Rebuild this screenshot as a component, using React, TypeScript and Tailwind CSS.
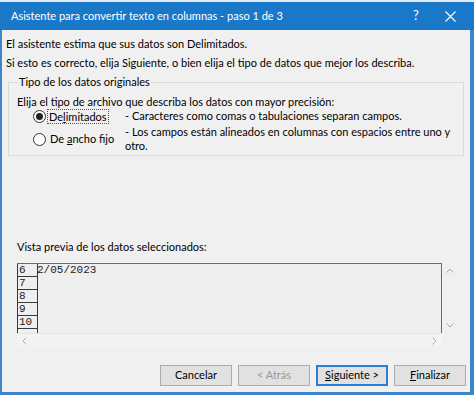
import React from "react";

const ui = "font-['Lato','Segoe_UI',sans-serif] text-[11px] text-black whitespace-nowrap";

function Radio({ checked }: { checked?: boolean }) {
  return (
    <span className="w-[13px] h-[13px] rounded-full border border-[#333] bg-white flex items-center justify-center shrink-0">
      {checked && <span className="w-[7px] h-[7px] rounded-full bg-[#222]" />}
    </span>
  );
}

function Btn({ children, primary, disabled }: { children: React.ReactNode; primary?: boolean; disabled?: boolean }) {
  return (
    <div
      className={`w-[72px] h-[21px] flex items-center justify-center bg-[#e1e1e1] ${
        primary ? "border-2 border-[#2a7fd4]" : "border border-[#adadad]"
      } ${disabled ? "text-[#9a9a9a]" : "text-black"}`}
    >
      {children}
    </div>
  );
}

const rows = ["6", "7", "8", "9", "10"];

export default function App() {
  return (
    <div className={`w-[474px] h-[395px] bg-[#e4ebf2] flex flex-col ${ui}`}>
      {/* title bar */}
      <div className="mt-[2px] h-[28px] bg-[#1a78c8] flex items-center text-white">
        <span className="ml-[11px] text-[11px]">Asistente para convertir texto en columnas - paso 1 de 3</span>
        <span className="ml-auto w-[20px] text-center text-[13px]">?</span>
        <span className="ml-[17px] mr-[17px] w-[14px] flex justify-center">
          <svg width="11" height="11" viewBox="0 0 11 11">
            <path d="M0.5 0.5L10.5 10.5M10.5 0.5L0.5 10.5" stroke="#fff" strokeWidth="1.1" />
          </svg>
        </span>
      </div>

      {/* body */}
      <div className="flex-1 bg-[#f0f0f0] border-l-2 border-r-4 border-b-3 border-[#3f84c6] flex flex-col">
        <div className="pl-[4px] mt-[4px] leading-[19px]">
          <p>El asistente estima que sus datos son Delimitados.</p>
          <p>Si esto es correcto, elija Siguiente, o bien elija el tipo de datos que mejor los describa.</p>
        </div>

        <fieldset className="ml-[6px] mr-[6px] mt-[2px] h-[82px] border border-[#dcdcdc] px-[8px] pt-[4px]">
          <legend className="ml-[1px] px-[1px] leading-[16px]">Tipo de los datos originales</legend>
          <p className="leading-[16px]">Elija el tipo de archivo que describa los datos con mayor precisión:</p>
          <div className="flex items-center mt-[-2px] h-[16px]">
            <div className="w-[100px] flex items-center pl-[16px]">
              <Radio checked />
              <span className="ml-[1px] px-[1px] border border-dotted border-[#555] leading-[13px]">
                De<u>l</u>imitados
              </span>
            </div>
            <span className="ml-[8px]">- Caracteres como comas o tabulaciones separan campos.</span>
          </div>
          <div className="flex items-center mt-[1px]">
            <div className="w-[100px] flex items-center pl-[16px]">
              <Radio />
              <span className="ml-[3px] px-[1px]">
                De <u>a</u>ncho fijo
              </span>
            </div>
            <span className="ml-[8px] leading-[14px]">
              - Los campos están alineados en columnas con espacios entre uno y
              <br />
              otro.
            </span>
          </div>
        </fieldset>

        <p className="ml-[15px] mt-[83px] leading-[16px]">Vista previa de los datos seleccionados:</p>

        <div className="ml-[15px] mt-[8px] w-[441px] flex flex-col">
          <div className="flex">
            <div className="w-[425px] h-[70px] border-t border-r border-[#6b6b6b] bg-[#efefef] overflow-hidden font-['Liberation_Mono',monospace] text-[11px] leading-[13px]">
              {rows.map((r, i) => (
                <div key={r} className="flex h-[13px]">
                  <div className="w-[21px] border-l border-r border-b border-[#3a3a3a] pl-[1px] text-[#222]">{r}</div>
                  {i === 0 && <div className="ml-[-1px] text-[#222]">2/05/2023</div>}
                </div>
              ))}
              <div className="w-[21px] h-[5px] border-l border-r border-[#3a3a3a]" />
            </div>
            <div className="w-[16px] h-[70px] bg-[#f0f0f0] flex flex-col items-center justify-between py-[5px] text-[#a8a8a8]">
              <svg width="8" height="5" viewBox="0 0 8 5">
                <path d="M0.5 4.5L4 1L7.5 4.5" stroke="currentColor" fill="none" />
              </svg>
              <svg width="8" height="5" viewBox="0 0 8 5">
                <path d="M0.5 0.5L4 4L7.5 0.5" stroke="currentColor" fill="none" />
              </svg>
            </div>
          </div>
          <div className="w-[425px] h-[14px] bg-[#f3f3f3] border-t border-[#e6e6e6] flex items-center justify-between px-[5px] text-[#b0b0b0]">
            <svg width="5" height="8" viewBox="0 0 5 8">
              <path d="M4.5 0.5L1 4L4.5 7.5" stroke="currentColor" fill="none" />
            </svg>
            <svg width="5" height="8" viewBox="0 0 5 8">
              <path d="M0.5 0.5L4 4L0.5 7.5" stroke="currentColor" fill="none" />
            </svg>
          </div>
        </div>

        <div className="mt-[18px] ml-[158px] flex gap-[6px]">
          <Btn>Cancelar</Btn>
          <Btn disabled>&lt; Atrás</Btn>
          <Btn primary>
            <u>S</u>iguiente &gt;
          </Btn>
          <Btn>
            <u>F</u>inalizar
          </Btn>
        </div>
      </div>
    </div>
  );
}
